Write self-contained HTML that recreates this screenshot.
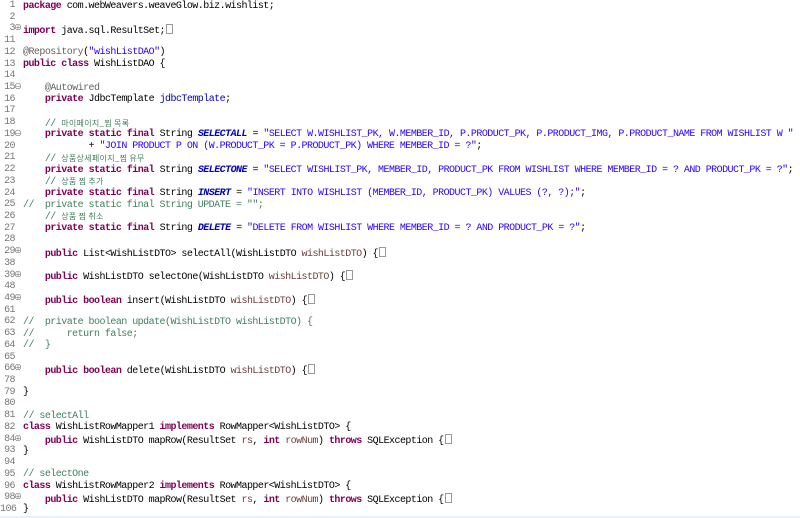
<!DOCTYPE html>
<html><head><meta charset="utf-8"><style>
html,body{margin:0;padding:0;background:#fff;width:800px;height:518px;overflow:hidden}
.wrap{position:relative;width:800px;height:518px}
.row{position:absolute;left:0;height:12px;white-space:pre;font-family:"Liberation Mono","Noto Sans CJK KR",monospace;font-size:10px;letter-spacing:-0.54px;line-height:12px;color:#000}
.ln{position:absolute;left:0;width:15px;text-align:right;color:#787878}
.mk{position:absolute;left:14px;color:#666;font-size:8px;letter-spacing:0}
.c{position:absolute;left:23px;top:0.5px}
.k{color:#7f0055;font-weight:bold}
.s{color:#2a00ff}
.cm{color:#3f7f5f}
.f{color:#0000c0;font-style:italic;font-weight:bold}
.fv{color:#0000c0}
.a{color:#646464}
.v{color:#6a3e3e}
.box{display:inline-block;width:5px;height:8px;border:1px solid #999;vertical-align:-1px;margin-left:1px}
.kr{font-family:"Noto Sans CJK KR",sans-serif;font-size:8px;letter-spacing:0.3px}
.bot{position:absolute;left:0;top:516px;width:800px;height:2px;background:#e8f2fe}
</style></head><body><div class="wrap">
<div class="row" style="top:0px"><span class="ln">1</span><span class="c"><span class="k">package</span> com.webWeavers.weaveGlow.biz.wishlist;</span></div>
<div class="row" style="top:11.72px"><span class="ln">2</span></div>
<div class="row" style="top:23.44px"><span class="ln">3</span><span class="mk">⊕</span><span class="c"><span class="k">import</span> java.sql.ResultSet;<span class="box"></span></span></div>
<div class="row" style="top:35.16px"><span class="ln">11</span></div>
<div class="row" style="top:46.88px"><span class="ln">12</span><span class="c"><span class="a">@Repository</span>(<span class="s">"wishListDAO"</span>)</span></div>
<div class="row" style="top:58.6px"><span class="ln">13</span><span class="c"><span class="k">public</span> <span class="k">class</span> WishListDAO {</span></div>
<div class="row" style="top:70.32px"><span class="ln">14</span></div>
<div class="row" style="top:82.04px"><span class="ln">15</span><span class="mk">⊖</span><span class="c">    <span class="a">@Autowired</span></span></div>
<div class="row" style="top:93.76px"><span class="ln">16</span><span class="c">    <span class="k">private</span> JdbcTemplate <span class="fv">jdbcTemplate</span>;</span></div>
<div class="row" style="top:105.48px"><span class="ln">17</span></div>
<div class="row" style="top:117.2px"><span class="ln">18</span><span class="c cm">    // <span class="kr">마이페이지_찜 목록</span></span></div>
<div class="row" style="top:128.92px"><span class="ln">19</span><span class="mk">⊖</span><span class="c">    <span class="k">private</span> <span class="k">static</span> <span class="k">final</span> String <span class="f">SELECTALL</span> = <span class="s">"SELECT W.WISHLIST_PK, W.MEMBER_ID, P.PRODUCT_PK, P.PRODUCT_IMG, P.PRODUCT_NAME FROM WISHLIST W "</span></span></div>
<div class="row" style="top:140.64px"><span class="ln">20</span><span class="c">            + <span class="s">"JOIN PRODUCT P ON (W.PRODUCT_PK = P.PRODUCT_PK) WHERE MEMBER_ID = ?"</span>;</span></div>
<div class="row" style="top:152.36px"><span class="ln">21</span><span class="c cm">    // <span class="kr">상품상세페이지_찜 유무</span></span></div>
<div class="row" style="top:164.08px"><span class="ln">22</span><span class="c">    <span class="k">private</span> <span class="k">static</span> <span class="k">final</span> String <span class="f">SELECTONE</span> = <span class="s">"SELECT WISHLIST_PK, MEMBER_ID, PRODUCT_PK FROM WISHLIST WHERE MEMBER_ID = ? AND PRODUCT_PK = ?"</span>;</span></div>
<div class="row" style="top:175.8px"><span class="ln">23</span><span class="c cm">    // <span class="kr">상품 찜 추가</span></span></div>
<div class="row" style="top:187.52px"><span class="ln">24</span><span class="c">    <span class="k">private</span> <span class="k">static</span> <span class="k">final</span> String <span class="f">INSERT</span> = <span class="s">"INSERT INTO WISHLIST (MEMBER_ID, PRODUCT_PK) VALUES (?, ?);"</span>;</span></div>
<div class="row" style="top:199.24px"><span class="ln">25</span><span class="c cm">//  private static final String UPDATE = "";</span></div>
<div class="row" style="top:210.96px"><span class="ln">26</span><span class="c cm">    // <span class="kr">상품 찜 취소</span></span></div>
<div class="row" style="top:222.68px"><span class="ln">27</span><span class="c">    <span class="k">private</span> <span class="k">static</span> <span class="k">final</span> String <span class="f">DELETE</span> = <span class="s">"DELETE FROM WISHLIST WHERE MEMBER_ID = ? AND PRODUCT_PK = ?"</span>;</span></div>
<div class="row" style="top:234.4px"><span class="ln">28</span></div>
<div class="row" style="top:246.12px"><span class="ln">29</span><span class="mk">⊕</span><span class="c">    <span class="k">public</span> List&lt;WishListDTO&gt; selectAll(WishListDTO <span class="v">wishListDTO</span>) {<span class="box"></span></span></div>
<div class="row" style="top:257.84px"><span class="ln">38</span></div>
<div class="row" style="top:269.56px"><span class="ln">39</span><span class="mk">⊕</span><span class="c">    <span class="k">public</span> WishListDTO selectOne(WishListDTO <span class="v">wishListDTO</span>) {<span class="box"></span></span></div>
<div class="row" style="top:281.28px"><span class="ln">48</span></div>
<div class="row" style="top:293px"><span class="ln">49</span><span class="mk">⊕</span><span class="c">    <span class="k">public</span> <span class="k">boolean</span> insert(WishListDTO <span class="v">wishListDTO</span>) {<span class="box"></span></span></div>
<div class="row" style="top:304.72px"><span class="ln">61</span></div>
<div class="row" style="top:316.44px"><span class="ln">62</span><span class="c cm">//  private boolean update(WishListDTO wishListDTO) {</span></div>
<div class="row" style="top:328.16px"><span class="ln">63</span><span class="c cm">//      return false;</span></div>
<div class="row" style="top:339.88px"><span class="ln">64</span><span class="c cm">//  }</span></div>
<div class="row" style="top:351.6px"><span class="ln">65</span></div>
<div class="row" style="top:363.32px"><span class="ln">66</span><span class="mk">⊕</span><span class="c">    <span class="k">public</span> <span class="k">boolean</span> delete(WishListDTO <span class="v">wishListDTO</span>) {<span class="box"></span></span></div>
<div class="row" style="top:375.04px"><span class="ln">78</span></div>
<div class="row" style="top:386.76px"><span class="ln">79</span><span class="c">}</span></div>
<div class="row" style="top:398.48px"><span class="ln">80</span></div>
<div class="row" style="top:410.2px"><span class="ln">81</span><span class="c cm">// selectAll</span></div>
<div class="row" style="top:421.92px"><span class="ln">82</span><span class="c"><span class="k">class</span> WishListRowMapper1 <span class="k">implements</span> RowMapper&lt;WishListDTO&gt; {</span></div>
<div class="row" style="top:433.64px"><span class="ln">84</span><span class="mk">⊕</span><span class="c">    <span class="k">public</span> WishListDTO mapRow(ResultSet <span class="v">rs</span>, <span class="k">int</span> <span class="v">rowNum</span>) <span class="k">throws</span> SQLException {<span class="box"></span></span></div>
<div class="row" style="top:445.36px"><span class="ln">93</span><span class="c">}</span></div>
<div class="row" style="top:457.08px"><span class="ln">94</span></div>
<div class="row" style="top:468.8px"><span class="ln">95</span><span class="c cm">// selectOne</span></div>
<div class="row" style="top:480.52px"><span class="ln">96</span><span class="c"><span class="k">class</span> WishListRowMapper2 <span class="k">implements</span> RowMapper&lt;WishListDTO&gt; {</span></div>
<div class="row" style="top:492.24px"><span class="ln">98</span><span class="mk">⊕</span><span class="c">    <span class="k">public</span> WishListDTO mapRow(ResultSet <span class="v">rs</span>, <span class="k">int</span> <span class="v">rowNum</span>) <span class="k">throws</span> SQLException {<span class="box"></span></span></div>
<div class="row" style="top:503.96px"><span class="ln">106</span><span class="c">}</span></div>
<div class="bot"></div>
</div></body></html>
